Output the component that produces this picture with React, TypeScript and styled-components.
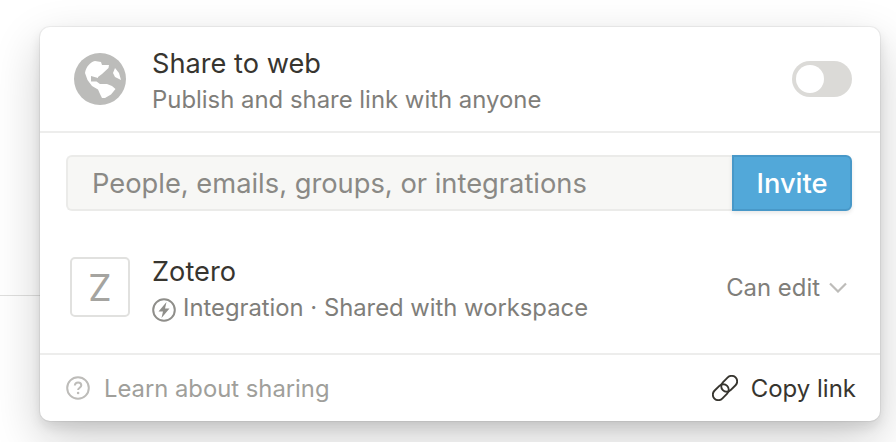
import styled, { createGlobalStyle } from 'styled-components';

const GlobalStyle = createGlobalStyle`
  html, body {
    margin: 0;
    padding: 0;
    background: #fff;
    overflow: hidden;
  }
  body {
    font-family: Inter, "Liberation Sans", sans-serif;
    -webkit-font-smoothing: antialiased;
  }
`;

const Page = styled.div`
  position: relative;
  width: 896px;
  height: 442px;
  padding: 27px 16px 0 40px;
  box-sizing: border-box;
  overflow: hidden;
`;

const BackgroundRule = styled.div`
  position: absolute;
  left: 0;
  top: 295px;
  width: 40px;
  height: 1px;
  background: #dfdfde;
`;

const Card = styled.div`
  position: relative;
  width: 840px;
  height: 394px;
  background: #fff;
  border-radius: 10px;
  box-shadow:
    0 0 0 1px rgba(15, 15, 15, 0.05),
    0 6px 12px rgba(15, 15, 15, 0.1),
    0 18px 48px rgba(15, 15, 15, 0.2);
  display: flex;
  flex-direction: column;
`;

const ShareRow = styled.div`
  height: 106px;
  box-sizing: border-box;
  display: flex;
  align-items: center;
  padding: 0 28px 0 34px;
  border-bottom: 2px solid #ededec;
`;

const TextBox = styled.div`
  flex-grow: 1;
  display: flex;
  flex-direction: column;
`;

const ShareText = styled(TextBox)`
  padding-top: 5px;
`;

const MemberText = styled(TextBox)`
  padding-top: 6px;
`;

const GlobeWrap = styled.div`
  width: 52px;
  height: 52px;
  margin-right: 26px;
  flex-shrink: 0;
`;

const Title = styled.div`
  font-size: 27.2px;
  line-height: 36px;
  color: #37352f;
`;

const Subtitle = styled.div`
  font-size: 23.9px;
  line-height: 36px;
  color: #7f7e7a;
  white-space: nowrap;
`;

const Toggle = styled.div`
  width: 60px;
  height: 36px;
  box-sizing: border-box;
  padding: 4px;
  border-radius: 18px;
  background: #dbdad7;
`;

const Knob = styled.div`
  width: 28px;
  height: 28px;
  border-radius: 50%;
  background: #fff;
`;

const InviteRow = styled.div`
  display: flex;
  height: 56px;
  margin: 22px 28px 0 26px;
`;

const InviteInput = styled.div`
  flex-grow: 1;
  box-sizing: border-box;
  display: flex;
  align-items: center;
  padding-left: 24px;
  font-size: 27.3px;
  color: #8a8985;
  background: #f7f7f5;
  border: 2px solid #ebebe9;
  border-right: none;
  border-radius: 6px 0 0 6px;
`;

const InviteButton = styled.div`
  width: 120px;
  box-sizing: border-box;
  display: flex;
  align-items: center;
  justify-content: center;
  font-size: 27.3px;
  font-weight: 500;
  color: #fff;
  background: #52a8d9;
  border: 2px solid #4898c8;
  border-radius: 0 6px 6px 0;
  box-shadow: 0 2px 4px rgba(15, 15, 15, 0.1);
`;

const MemberRow = styled.div`
  height: 144px;
  box-sizing: border-box;
  display: flex;
  align-items: center;
  padding: 10px 33px 0 30px;
  border-bottom: 2px solid #ededec;
`;

const Avatar = styled.div`
  width: 60px;
  height: 60px;
  box-sizing: border-box;
  margin-right: 22px;
  flex-shrink: 0;
  display: flex;
  align-items: center;
  justify-content: center;
  font-size: 37px;
  color: #a5a4a0;
  border: 2px solid #e1e1df;
  border-radius: 5px;
`;

const MemberMeta = styled.div`
  display: flex;
  align-items: center;
  gap: 7px;
  font-size: 23.8px;
  line-height: 36px;
  color: #7f7e7a;
  white-space: nowrap;
`;

const BoltWrap = styled.span`
  display: flex;
  margin-top: 4px;
`;

const Role = styled.div`
  display: flex;
  align-items: center;
  gap: 9px;
  font-size: 23.9px;
  color: #7f7e7a;
`;

const Footer = styled.div`
  flex-grow: 1;
  display: flex;
  align-items: center;
  justify-content: space-between;
  padding: 0 24px 0 26px;
`;

const FooterLeft = styled.div`
  display: flex;
  align-items: center;
  gap: 14px;
  font-size: 23.8px;
  color: #a09f9b;
`;

const CopyLink = styled.div`
  display: flex;
  align-items: center;
  gap: 13px;
  font-size: 24px;
  color: #37352f;
`;

const Globe = () => (
  <svg width="52" height="52" viewBox="0 0 52 52">
    <circle cx="26" cy="26" r="26" fill="#bcbcba" />
    <path
      d="M11 20C12 14 16 9 21 8L27 9L28 12L35 12L34.500 15L28 21L24 24L24 25L17 23L17 28.500L22.500 28.500L26 31L33 31L38 33L41.500 36L37 41.500L31 45L28 45L26 41L24 36.500L18 33L13.500 27Z"
      fill="#fff"
    />
    <path d="M41 15L45 20L47 27L41 24L39 20Z" fill="#fff" />
  </svg>
);

const BoltCircle = () => (
  <svg width="24" height="24" viewBox="0 0 24 24" fill="none">
    <circle cx="12" cy="12" r="10.8" stroke="#8f8e8a" strokeWidth="2" />
    <path d="M14.500 4 6.500 13.500H11L9.500 20l8-9.500H13L14.500 4z" fill="#8f8e8a" />
  </svg>
);

const HelpCircle = () => (
  <svg width="24" height="24" viewBox="0 0 24 24" fill="none">
    <circle cx="12" cy="12" r="10.8" stroke="#bdbcb9" strokeWidth="2" />
    <path
      d="M8.800 9.500c.2-1.900 1.500-3 3.300-3 1.800 0 3.200 1.100 3.200 2.800 0 2.400-3.200 2.500-3.200 4.700"
      stroke="#bdbcb9"
      strokeWidth="2"
    />
    <circle cx="12.100" cy="17" r="1.300" fill="#bdbcb9" />
  </svg>
);

const LinkGlyph = () => (
  <svg width="26" height="26" viewBox="0 0 26 26" fill="none" stroke="#37352f" strokeWidth="1.900">
    <rect x="-0.200" y="11.700" width="18" height="11" rx="5.500" transform="rotate(-45 8.800 17.200)" />
    <rect x="8.200" y="3.300" width="18" height="11" rx="5.500" transform="rotate(-45 17.200 8.800)" />
  </svg>
);

const Chevron = () => (
  <svg width="18" height="11" viewBox="0 0 18 11" fill="none">
    <path d="M1 1.500 9 9.500 17 1.500" stroke="#bdbcb9" strokeWidth="2.200" />
  </svg>
);

const App = () => (
  <Page>
    <GlobalStyle />
    <BackgroundRule />
    <Card>
      <ShareRow>
        <GlobeWrap>
          <Globe />
        </GlobeWrap>
        <ShareText>
          <Title>Share to web</Title>
          <Subtitle>Publish and share link with anyone</Subtitle>
        </ShareText>
        <Toggle>
          <Knob />
        </Toggle>
      </ShareRow>
      <InviteRow>
        <InviteInput>People, emails, groups, or integrations</InviteInput>
        <InviteButton>Invite</InviteButton>
      </InviteRow>
      <MemberRow>
        <Avatar>Z</Avatar>
        <MemberText>
          <Title>Zotero</Title>
          <MemberMeta>
            <BoltWrap>
              <BoltCircle />
            </BoltWrap>
            Integration · Shared with workspace
          </MemberMeta>
        </MemberText>
        <Role>
          Can edit
          <Chevron />
        </Role>
      </MemberRow>
      <Footer>
        <FooterLeft>
          <HelpCircle />
          Learn about sharing
        </FooterLeft>
        <CopyLink>
          <LinkGlyph />
          Copy link
        </CopyLink>
      </Footer>
    </Card>
  </Page>
);

export default App;
